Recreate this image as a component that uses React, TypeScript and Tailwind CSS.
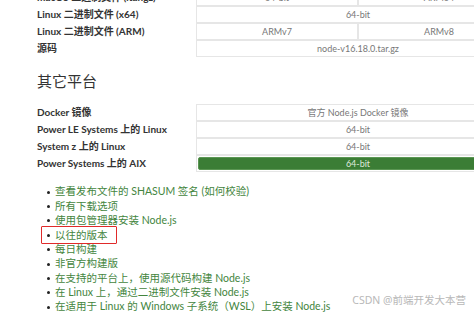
import React from "react";

const font = { fontFamily: '"Lato", "Noto Sans CJK SC", sans-serif' };

function Cell({ children, green }: { children?: React.ReactNode; green?: boolean }) {
  if (green) {
    return (
      <div className="flex-1 h-[17px] border border-[#e6e6e6] p-[1px]">
        <div className="h-full rounded-[2px] bg-[#3b7d35] border border-[#5b9653] flex items-center justify-center text-[9px] text-[#dfe9dc]">
          {children}
        </div>
      </div>
    );
  }
  return (
    <div className="flex-1 h-[17px] border border-[#e6e6e6] bg-white flex items-center justify-center text-[9px] text-[#777]">
      {children}
    </div>
  );
}

function Row({ label, cells, green }: { label: string; cells: string[]; green?: boolean }) {
  return (
    <div className="flex items-center h-[17px]">
      <div className="w-[159px] shrink-0 text-[10px] font-bold text-[#333] leading-[17px] whitespace-nowrap">{label}</div>
      <div className="w-[324px] shrink-0 flex">
        {cells.map((c, i) => (
          <Cell key={i} green={green}>
            {c}
          </Cell>
        ))}
      </div>
    </div>
  );
}

const links = [
  "查看发布文件的 SHASUM 签名 (如何校验)",
  "所有下载选项",
  "使用包管理器安装 Node.js",
  "以往的版本",
  "每日构建",
  "非官方构建版",
  "在支持的平台上，使用源代码构建 Node.js",
  "在 Linux 上，通过二进制文件安装 Node.js",
  "在适用于 Linux 的 Windows 子系统（WSL）上安装 Node.js",
];

export default function App() {
  return (
    <div className="relative w-[474px] h-[312px] overflow-hidden bg-white" style={font}>
      <div className="-mt-[11px] pl-[37px]">
        <Row label="macOS 二进制文件 (.tar.gz)" cells={["64-bit", "ARM64"]} />
        <Row label="Linux 二进制文件 (x64)" cells={["64-bit"]} />
        <Row label="Linux 二进制文件 (ARM)" cells={["ARMv7", "ARMv8"]} />
        <Row label="源码" cells={["node-v16.18.0.tar.gz"]} />

        <div className="mt-[14px] h-[20px] leading-[20px] text-[15px] text-[#333]">其它平台</div>

        <div className="mt-[13px]">
          <Row label="Docker 镜像" cells={["官方 Node.js Docker 镜像"]} />
          <Row label="Power LE Systems 上的 Linux" cells={["64-bit"]} />
          <Row label="System z 上的 Linux" cells={["64-bit"]} />
          <Row label="Power Systems 上的 AIX" cells={["64-bit"]} green />
        </div>

        <ul className="mt-[13px] pl-[10px]">
          {links.map((t) => (
            <li key={t} className="relative flex items-center h-[14.4px] text-[10.5px] text-[#43853d] whitespace-nowrap">
              <span className="w-[3px] h-[3px] rounded-full bg-[#222] mr-[5px] shrink-0" />
              <span>{t}</span>
              {t === "以往的版本" && (
                <span className="absolute left-[-6px] top-[-2px] w-[76px] h-[18px] border-[1.5px] border-[#e02a2a] rounded-[1px]" />
              )}
            </li>
          ))}
        </ul>
      </div>
      <div className="absolute right-[8px] bottom-[3px] text-[10.5px] text-[#b8b8b8] whitespace-nowrap" style={{ fontFamily: '"Noto Sans", "Noto Sans CJK SC", sans-serif' }}>
        CSDN @前端开发大本营
      </div>
    </div>
  );
}
